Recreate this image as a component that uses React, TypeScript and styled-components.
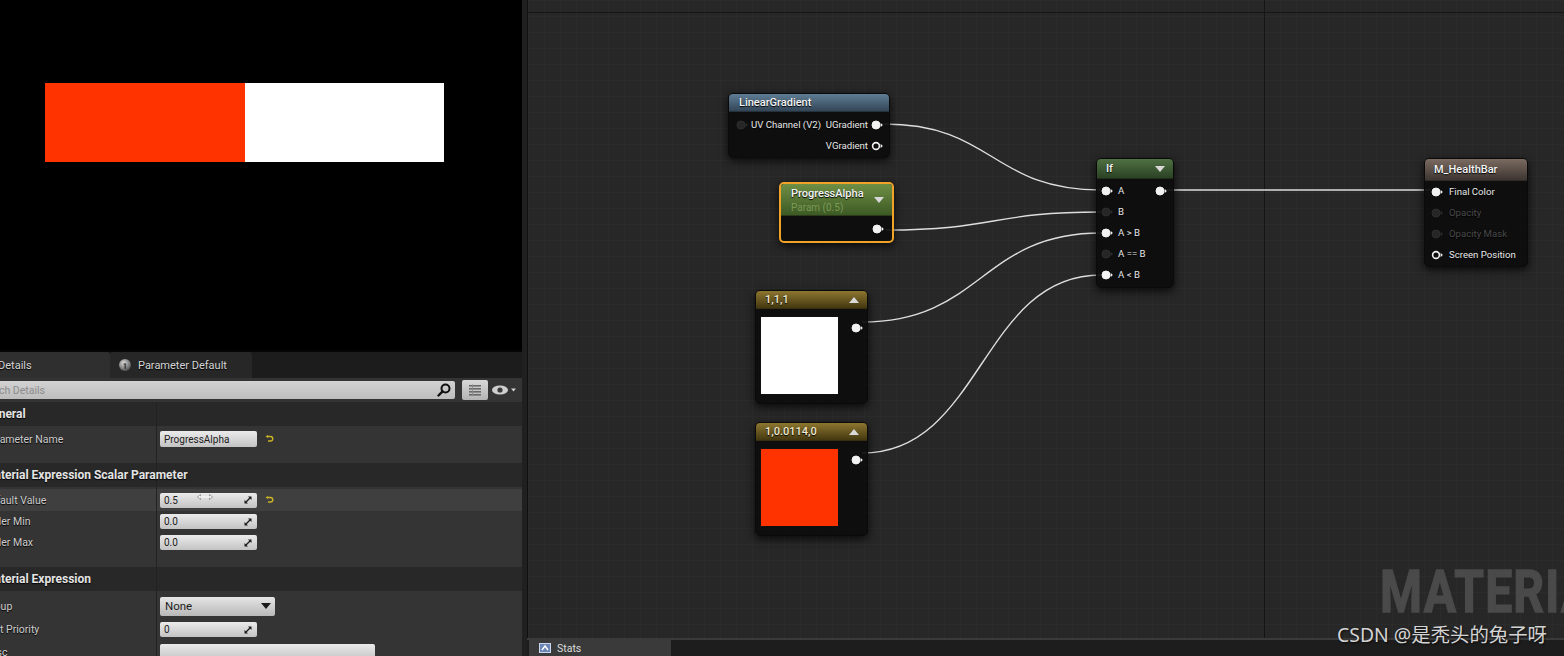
import React from "react";
import styled, { createGlobalStyle, css } from "styled-components";

const GlobalStyle = createGlobalStyle`
  html, body {
    margin: 0;
    padding: 0;
    width: 1564px;
    height: 656px;
    overflow: hidden;
    background: #1b1b1b;
  }
  body {
    font-family: Roboto, "Noto Sans", sans-serif;
  }
`;

type PinKind = "filled" | "hollow" | "dim";
type Tone = "blue" | "green" | "param" | "brown" | "gold";

const headerTones: Record<Tone, string> = {
  blue: "linear-gradient(#5f7d95, #334657)",
  green: "linear-gradient(#4f7142, #2b4225)",
  param: "linear-gradient(#6f8f45, #3c5a24)",
  brown: "linear-gradient(#7b6b61, #3d3531)",
  gold: "linear-gradient(#8d7630, #443810)",
};

const Screen = styled.div`
  position: relative;
  display: flex;
  width: 1564px;
  height: 656px;
  overflow: hidden;
`;

const LeftColumn = styled.div`
  width: 522px;
  flex-shrink: 0;
  display: flex;
  flex-direction: column;
`;

const Viewport = styled.div`
  height: 350px;
  flex-shrink: 0;
  background: #000;
  box-sizing: border-box;
  padding: 83px 0 0 45px;
`;

const BarPreview = styled.div`
  display: flex;
  width: 399px;
  height: 79px;
`;

const BarFill = styled.div<{ $color: string }>`
  flex: 1;
  background: ${(p) => p.$color};
`;

const DetailsPanel = styled.div`
  flex: 1;
  background: #343434;
  overflow: hidden;
`;

const DetailsInner = styled.div`
  margin-left: -18px;
  width: 540px;
`;

const TabStrip = styled.div`
  height: 26px;
  border-top: 2px solid #050505;
  background: #1c1c1c;
  display: flex;
`;

const Tab = styled.div<{ $active?: boolean; $width: number; $pad: number }>`
  width: ${(p) => p.$width}px;
  box-sizing: border-box;
  padding-left: ${(p) => p.$pad}px;
  display: flex;
  align-items: center;
  gap: 6px;
  font-size: 11px;
  color: #d6d6d6;
  text-shadow: 0 1px 1px #000;
  background: ${(p) => (p.$active ? "#2f2f2f" : "#272727")};
  border-radius: 3px 3px 0 0;
`;

const SearchRow = styled.div`
  height: 24px;
  display: flex;
  align-items: center;
`;

const SearchBox = styled.div`
  width: 477px;
  height: 18px;
  margin-left: -4px;
  box-sizing: border-box;
  padding-right: 4px;
  border-radius: 2px;
  background: linear-gradient(#d2d2d2, #bdbdbd);
  display: flex;
  align-items: center;
  justify-content: space-between;
  font-size: 10.5px;
  color: #8c8c8c;
`;

const ViewButton = styled.div`
  width: 26px;
  height: 20px;
  margin-left: 7px;
  border-radius: 2px;
  background: linear-gradient(#d8d8d8, #b4b4b4);
  display: flex;
  align-items: center;
  justify-content: center;
`;

const EyeButton = styled.div`
  width: 28px;
  height: 20px;
  margin-left: 2px;
  display: flex;
  align-items: center;
  justify-content: center;
  gap: 1px;
`;

const columnLine = css`
  background-image: linear-gradient(
    to right,
    transparent 174px,
    #222 174px,
    #222 175px,
    transparent 175px
  );
`;

const CategoryHeader = styled.div`
  height: 24px;
  line-height: 24px;
  padding-left: 2px;
  background-color: #282828;
  ${columnLine};
  font-size: 12px;
  font-weight: 700;
  color: #e4e4e4;
  text-shadow: 0 1px 1px #000;
  white-space: nowrap;
`;

const CategoryBody = styled.div<{ $top: number; $bottom: number }>`
  padding: ${(p) => p.$top}px 0 ${(p) => p.$bottom}px;
  ${columnLine};
`;

const PropertyRow = styled.div<{ $height: number; $highlight?: boolean }>`
  height: ${(p) => p.$height}px;
  display: grid;
  grid-template-columns: 175px 1fr;
  align-items: center;
  background-color: ${(p) => (p.$highlight ? "#3f3f3f" : "transparent")};
  ${columnLine};
`;

const PropLabel = styled.div`
  padding-left: 2px;
  font-size: 10.5px;
  color: #cdcdcd;
  text-shadow: 0 1px 1px #000;
  white-space: nowrap;
`;

const PropValue = styled.div`
  position: relative;
  padding-left: 3px;
  display: flex;
  align-items: center;
  gap: 8px;
`;

const Field = styled.div<{ $width: number; $height?: number }>`
  width: ${(p) => p.$width}px;
  height: ${(p) => p.$height ?? 16}px;
  box-sizing: border-box;
  padding: 0 5px 0 4px;
  border-radius: 2px;
  background: linear-gradient(#ebebeb, #c3c3c3);
  display: flex;
  align-items: center;
  justify-content: space-between;
  font-size: 10px;
  color: #1c1c1c;
`;

const Dropdown = styled(Field)`
  font-size: 11.5px;
  padding: 0 4px 0 5px;
  background: linear-gradient(#e6e6e6, #b8b8b8);
`;

const CursorMark = styled.svg`
  position: absolute;
  left: 40px;
  top: 1px;
`;

const RightColumn = styled.div`
  flex: 1;
  display: flex;
  flex-direction: column;
  border-left: 5px solid #202020;
`;

const Graph = styled.div`
  position: relative;
  flex: 1;
  overflow: hidden;
  border-left: 1px solid #101010;
  background-color: #272727;
  background-image: linear-gradient(#151515, #151515),
    linear-gradient(#151515, #151515),
    repeating-linear-gradient(
      to right,
      rgba(255, 255, 255, 0.02) 0 1px,
      transparent 1px 16px
    ),
    repeating-linear-gradient(
      to bottom,
      rgba(255, 255, 255, 0.02) 0 1px,
      transparent 1px 16px
    );
  background-size: 1px 100%, 100% 1px, auto, auto;
  background-position: 736px 0, 0 12px, 0 0, 0 0;
  background-repeat: no-repeat, no-repeat, repeat, repeat;
`;

const Wires = styled.svg`
  position: absolute;
  left: 0;
  top: 0;
  width: 100%;
  height: 100%;
  pointer-events: none;
`;

const Node = styled.div<{ $x: number; $y: number; $w: number; $selected?: boolean }>`
  position: absolute;
  left: ${(p) => p.$x}px;
  top: ${(p) => p.$y}px;
  width: ${(p) => p.$w}px;
  box-sizing: border-box;
  border-radius: 5px;
  overflow: hidden;
  background: rgba(13, 13, 13, 0.93);
  border: ${(p) => (p.$selected ? "2px solid #f0a326" : "1px solid #0a0a0a")};
  box-shadow: 0 3px 8px rgba(0, 0, 0, 0.75);
`;

const NodeHeader = styled.div<{ $tone: Tone; $height: number; $pad: number }>`
  position: relative;
  height: ${(p) => p.$height}px;
  box-sizing: border-box;
  padding: 0 8px 0 ${(p) => p.$pad}px;
  background: ${(p) => headerTones[p.$tone]};
  display: flex;
  align-items: center;
  justify-content: space-between;
  border-bottom: 1px solid rgba(0, 0, 0, 0.6);
`;

const NodeTitle = styled.div<{ $light?: boolean }>`
  font-size: 11px;
  font-weight: 500;
  color: ${(p) => (p.$light ? "#f2ead2" : "#f4f4f4")};
  text-shadow: 0 1px 1px #000;
  white-space: nowrap;
`;

const TitleStack = styled.div`
  display: flex;
  flex-direction: column;
  gap: 2px;
`;

const SubTitle = styled.div`
  font-size: 10px;
  color: #8fae68;
  opacity: 0.7;
`;

const Caret = styled.span<{ $up?: boolean; $dark?: boolean }>`
  width: 0;
  height: 0;
  border-left: 5px solid transparent;
  border-right: 5px solid transparent;
  ${(p) => {
    const c = p.$dark ? "#1a1a1a" : "#d8d8d8";
    return p.$up ? `border-bottom: 6px solid ${c};` : `border-top: 6px solid ${c};`;
  }}
`;

const NodeBody = styled.div<{ $top: number; $bottom: number }>`
  padding: ${(p) => p.$top}px 0 ${(p) => p.$bottom}px;
`;

const PinRow = styled.div<{ $left: number; $right: number; $end?: boolean }>`
  height: 21px;
  display: flex;
  align-items: center;
  justify-content: ${(p) => (p.$end ? "flex-end" : "space-between")};
  padding: 0 ${(p) => p.$right}px 0 ${(p) => p.$left}px;
`;

const PinGroup = styled.div<{ $gap: number }>`
  display: flex;
  align-items: center;
  gap: ${(p) => p.$gap}px;
`;

const PinLabel = styled.span<{ $dim?: boolean }>`
  font-size: 9.6px;
  color: ${(p) => (p.$dim ? "#4a4a4a" : "#e8e8e8")};
  text-shadow: 0 1px 1px #000;
  white-space: nowrap;
`;

const ConstBody = styled.div`
  display: flex;
  padding: 7px 0 8px 4px;
`;

const Swatch = styled.div<{ $color: string }>`
  width: 79px;
  height: 79px;
  box-sizing: border-box;
  border: 1px solid #111;
  background: ${(p) => p.$color};
`;

const ConstPin = styled.div`
  padding: 2px 0 0 12px;
`;

const Watermark = styled.div`
  position: absolute;
  left: 852px;
  top: 570px;
  font-size: 60px;
  line-height: 44px;
  font-weight: 700;
  color: #4a4a4a;
  -webkit-text-stroke: 1.5px #4a4a4a;
  white-space: nowrap;
  letter-spacing: 1.5px;
  transform: scaleX(0.8);
  transform-origin: left top;
`;

const BottomBar = styled.div`
  height: 16px;
  flex-shrink: 0;
  border-top: 2px solid #3a3a3a;
  background: #1d1d1d;
  display: flex;
  padding-left: 2px;
`;

const StatsTab = styled.div`
  width: 142px;
  box-sizing: border-box;
  padding-left: 10px;
  display: flex;
  align-items: center;
  gap: 6px;
  background: #3a3a3a;
  font-size: 10.5px;
  color: #dcdcdc;
`;

const Credit = styled.div`
  position: absolute;
  left: 1337px;
  top: 622px;
  font-family: "Noto Sans", "Noto Sans CJK SC", sans-serif;
  font-size: 19.4px;
  line-height: 26px;
  color: #d4d4d4;
  text-shadow: 1px 1px 2px rgba(0, 0, 0, 0.7);
  white-space: nowrap;
`;

function Pin({ kind }: { kind: PinKind }) {
  const fill = kind === "filled" ? "#f2f2f2" : kind === "dim" ? "#262626" : "none";
  const stroke = kind === "dim" ? "#2e2e2e" : "#f2f2f2";
  return (
    <svg width="12" height="10" viewBox="0 0 12 10">
      <circle cx="5" cy="5" r={kind === "hollow" ? 3.4 : 4} fill={fill} stroke={stroke} strokeWidth={kind === "hollow" ? 1.6 : 1} />
      <polygon points="9.6,2.8 11.8,5 9.6,7.2" fill={kind === "dim" ? "#2e2e2e" : "#f2f2f2"} />
    </svg>
  );
}

function SpinIcon() {
  return (
    <svg width="8" height="8" viewBox="0 0 8 8">
      <path d="M4 0.5 H7.5 V4 Z M0.5 4 V7.5 H4 Z" fill="#1a1a1a" />
      <path d="M6 2 L2 6" stroke="#1a1a1a" strokeWidth="1.2" />
    </svg>
  );
}

function ResetIcon() {
  return (
    <svg width="9" height="8" viewBox="0 0 9 8">
      <path d="M2.5 1.5 H5.5 A2.2 2.2 0 0 1 5.5 6 H3" stroke="#c9b422" strokeWidth="1.4" fill="none" />
      <polygon points="0.5,1.5 3,0 3,3" fill="#c9b422" />
    </svg>
  );
}

function SearchIcon() {
  return (
    <svg width="14" height="14" viewBox="0 0 14 14">
      <circle cx="8.5" cy="5.5" r="4" stroke="#111" strokeWidth="2" fill="none" />
      <path d="M5.6 8.4 L1.5 12.5" stroke="#111" strokeWidth="2.4" strokeLinecap="round" />
    </svg>
  );
}

function ListIcon() {
  return (
    <svg width="14" height="12" viewBox="0 0 14 12">
      {[1, 4, 7, 10].map((y) => (
        <rect key={y} x="1" y={y} width="12" height="1.6" fill="#6a6a6a" />
      ))}
      <rect x="4" y="0.5" width="1" height="11" fill="#8a8a8a" />
    </svg>
  );
}

function EyeIcon() {
  return (
    <svg width="26" height="12" viewBox="0 0 26 12">
      <ellipse cx="9" cy="6" rx="8" ry="4.6" fill="#cfcfcf" />
      <circle cx="9" cy="6" r="2.6" fill="#3a3a3a" />
      <polygon points="20,4.5 25,4.5 22.5,7.5" fill="#cfcfcf" />
    </svg>
  );
}

function SphereIcon() {
  return (
    <svg width="14" height="14" viewBox="0 0 14 14">
      <defs>
        <radialGradient id="sph" cx="0.4" cy="0.35" r="0.7">
          <stop offset="0" stopColor="#e0e0e0" />
          <stop offset="1" stopColor="#4a4a4a" />
        </radialGradient>
      </defs>
      <circle cx="7" cy="7" r="6" fill="url(#sph)" />
      <text x="7" y="10" fontSize="8" textAnchor="middle" fill="#333" fontFamily="Roboto, sans-serif">1</text>
    </svg>
  );
}

function StatsIcon() {
  return (
    <svg width="12" height="10" viewBox="0 0 12 10">
      <rect x="0.5" y="0.5" width="11" height="9" fill="#6c87b5" stroke="#c9d6ee" />
      <path d="M3 7 L6 3 L9 7" stroke="#fff" strokeWidth="1.4" fill="none" />
    </svg>
  );
}

const wirePaths = [
  "M356 124 C466 124 463 190 573 190",
  "M358 230 C468 230 463 212 573 212",
  "M334 322 C454 322 453 233 573 233",
  "M334 453 C454 453 453 275 573 275",
  "M639 190 L903 190",
];

const ifInputs: { label: string; kind: PinKind }[] = [
  { label: "A", kind: "filled" },
  { label: "B", kind: "dim" },
  { label: "A > B", kind: "filled" },
  { label: "A == B", kind: "dim" },
  { label: "A < B", kind: "filled" },
];

const outputs: { label: string; kind: PinKind }[] = [
  { label: "Final Color", kind: "filled" },
  { label: "Opacity", kind: "dim" },
  { label: "Opacity Mask", kind: "dim" },
  { label: "Screen Position", kind: "hollow" },
];

function ConstantNode({ x, y, title, color }: { x: number; y: number; title: string; color: string }) {
  return (
    <Node $x={x} $y={y} $w={113}>
      <NodeHeader $tone="gold" $height={18} $pad={9}>
        <NodeTitle $light>{title}</NodeTitle>
        <Caret $up />
      </NodeHeader>
      <ConstBody>
        <Swatch $color={color} />
        <ConstPin>
          <Pin kind="filled" />
        </ConstPin>
      </ConstBody>
    </Node>
  );
}

export default function App() {
  return (
    <>
      <GlobalStyle />
      <Screen>
        <LeftColumn>
          <Viewport>
            <BarPreview>
              <BarFill $color="#ff3300" />
              <BarFill $color="#ffffff" />
            </BarPreview>
          </Viewport>
          <DetailsPanel>
            <DetailsInner>
              <TabStrip>
                <Tab $active $width={128} $pad={16}>
                  Details
                </Tab>
                <Tab $width={142} $pad={8}>
                  <SphereIcon />
                  Parameter Default
                </Tab>
              </TabStrip>
              <SearchRow>
                <SearchBox>
                  <span>Search Details</span>
                  <SearchIcon />
                </SearchBox>
                <ViewButton>
                  <ListIcon />
                </ViewButton>
                <EyeButton>
                  <EyeIcon />
                </EyeButton>
              </SearchRow>

              <CategoryHeader>General</CategoryHeader>
              <CategoryBody $top={0} $bottom={11}>
                <PropertyRow $height={26}>
                  <PropLabel>Parameter Name</PropLabel>
                  <PropValue>
                    <Field $width={97}>ProgressAlpha</Field>
                    <ResetIcon />
                  </PropValue>
                </PropertyRow>
              </CategoryBody>

              <CategoryHeader>Material Expression Scalar Parameter</CategoryHeader>
              <CategoryBody $top={2} $bottom={14}>
                <PropertyRow $height={22} $highlight>
                  <PropLabel>Default Value</PropLabel>
                  <PropValue>
                    <Field $width={97} $height={15}>
                      0.5
                      <SpinIcon />
                    </Field>
                    <ResetIcon />
                    <CursorMark width="16" height="6" viewBox="0 0 16 6">
                      <path d="M0.5 3 L3.5 0.5 V5.5 Z M15.5 3 L12.5 0.5 V5.5 Z" fill="#f4f4f4" stroke="#555" strokeWidth="0.5" />
                      <rect x="3" y="2.2" width="10" height="1.6" fill="#f4f4f4" />
                    </CursorMark>
                  </PropValue>
                </PropertyRow>
                <PropertyRow $height={21}>
                  <PropLabel>Slider Min</PropLabel>
                  <PropValue>
                    <Field $width={97} $height={15}>
                      0.0
                      <SpinIcon />
                    </Field>
                  </PropValue>
                </PropertyRow>
                <PropertyRow $height={21}>
                  <PropLabel>Slider Max</PropLabel>
                  <PropValue>
                    <Field $width={97} $height={15}>
                      0.0
                      <SpinIcon />
                    </Field>
                  </PropValue>
                </PropertyRow>
              </CategoryBody>

              <CategoryHeader>Material Expression</CategoryHeader>
              <CategoryBody $top={3} $bottom={0}>
                <PropertyRow $height={24}>
                  <PropLabel>Group</PropLabel>
                  <PropValue>
                    <Dropdown $width={115} $height={19}>
                      None
                      <Caret $dark />
                    </Dropdown>
                  </PropValue>
                </PropertyRow>
                <PropertyRow $height={23}>
                  <PropLabel>Sort Priority</PropLabel>
                  <PropValue>
                    <Field $width={97} $height={15}>
                      0
                      <SpinIcon />
                    </Field>
                  </PropValue>
                </PropertyRow>
                <PropertyRow $height={22}>
                  <PropLabel>Desc</PropLabel>
                  <PropValue>
                    <Field $width={215} $height={16} />
                  </PropValue>
                </PropertyRow>
              </CategoryBody>
            </DetailsInner>
          </DetailsPanel>
        </LeftColumn>

        <RightColumn>
          <Graph>
            <Wires viewBox="0 0 1036 638">
              {wirePaths.map((d) => (
                <path key={d} d={d} fill="none" stroke="#dedede" strokeWidth="1.4" />
              ))}
            </Wires>

            <Node $x={200} $y={93} $w={162}>
              <NodeHeader $tone="blue" $height={18} $pad={10}>
                <NodeTitle>LinearGradient</NodeTitle>
              </NodeHeader>
              <NodeBody $top={2} $bottom={1}>
                <PinRow $left={7} $right={6}>
                  <PinGroup $gap={3}>
                    <Pin kind="dim" />
                    <PinLabel>UV Channel (V2)</PinLabel>
                  </PinGroup>
                  <PinGroup $gap={3}>
                    <PinLabel>UGradient</PinLabel>
                    <Pin kind="filled" />
                  </PinGroup>
                </PinRow>
                <PinRow $left={7} $right={6} $end>
                  <PinGroup $gap={3}>
                    <PinLabel>VGradient</PinLabel>
                    <Pin kind="hollow" />
                  </PinGroup>
                </PinRow>
              </NodeBody>
            </Node>

            <Node $x={251} $y={182} $w={115} $selected>
              <NodeHeader $tone="param" $height={32} $pad={10}>
                <TitleStack>
                  <NodeTitle>ProgressAlpha</NodeTitle>
                  <SubTitle>Param (0.5)</SubTitle>
                </TitleStack>
                <Caret />
              </NodeHeader>
              <NodeBody $top={2} $bottom={2}>
                <PinRow $left={6} $right={8} $end>
                  <Pin kind="filled" />
                </PinRow>
              </NodeBody>
            </Node>

            <Node $x={568} $y={158} $w={78}>
              <NodeHeader $tone="green" $height={20} $pad={9}>
                <NodeTitle>If</NodeTitle>
                <Caret />
              </NodeHeader>
              <NodeBody $top={1} $bottom={2}>
                {ifInputs.map((pin, i) => (
                  <PinRow key={pin.label} $left={4} $right={6}>
                    <PinGroup $gap={5}>
                      <Pin kind={pin.kind} />
                      <PinLabel>{pin.label}</PinLabel>
                    </PinGroup>
                    {i === 0 && <Pin kind="filled" />}
                  </PinRow>
                ))}
              </NodeBody>
            </Node>

            <Node $x={896} $y={158} $w={104}>
              <NodeHeader $tone="brown" $height={22} $pad={9}>
                <NodeTitle>M_HealthBar</NodeTitle>
              </NodeHeader>
              <NodeBody $top={0} $bottom={1}>
                {outputs.map((pin) => (
                  <PinRow key={pin.label} $left={6} $right={4}>
                    <PinGroup $gap={6}>
                      <Pin kind={pin.kind} />
                      <PinLabel $dim={pin.kind === "dim"}>{pin.label}</PinLabel>
                    </PinGroup>
                  </PinRow>
                ))}
              </NodeBody>
            </Node>

            <ConstantNode x={227} y={290} title="1,1,1" color="#ffffff" />
            <ConstantNode x={227} y={422} title="1,0.0114,0" color="#ff3300" />

            <Watermark>MATERIAL</Watermark>
          </Graph>
          <BottomBar>
            <StatsTab>
              <StatsIcon />
              Stats
            </StatsTab>
          </BottomBar>
        </RightColumn>

        <Credit>CSDN @是秃头的兔子呀</Credit>
      </Screen>
    </>
  );
}
